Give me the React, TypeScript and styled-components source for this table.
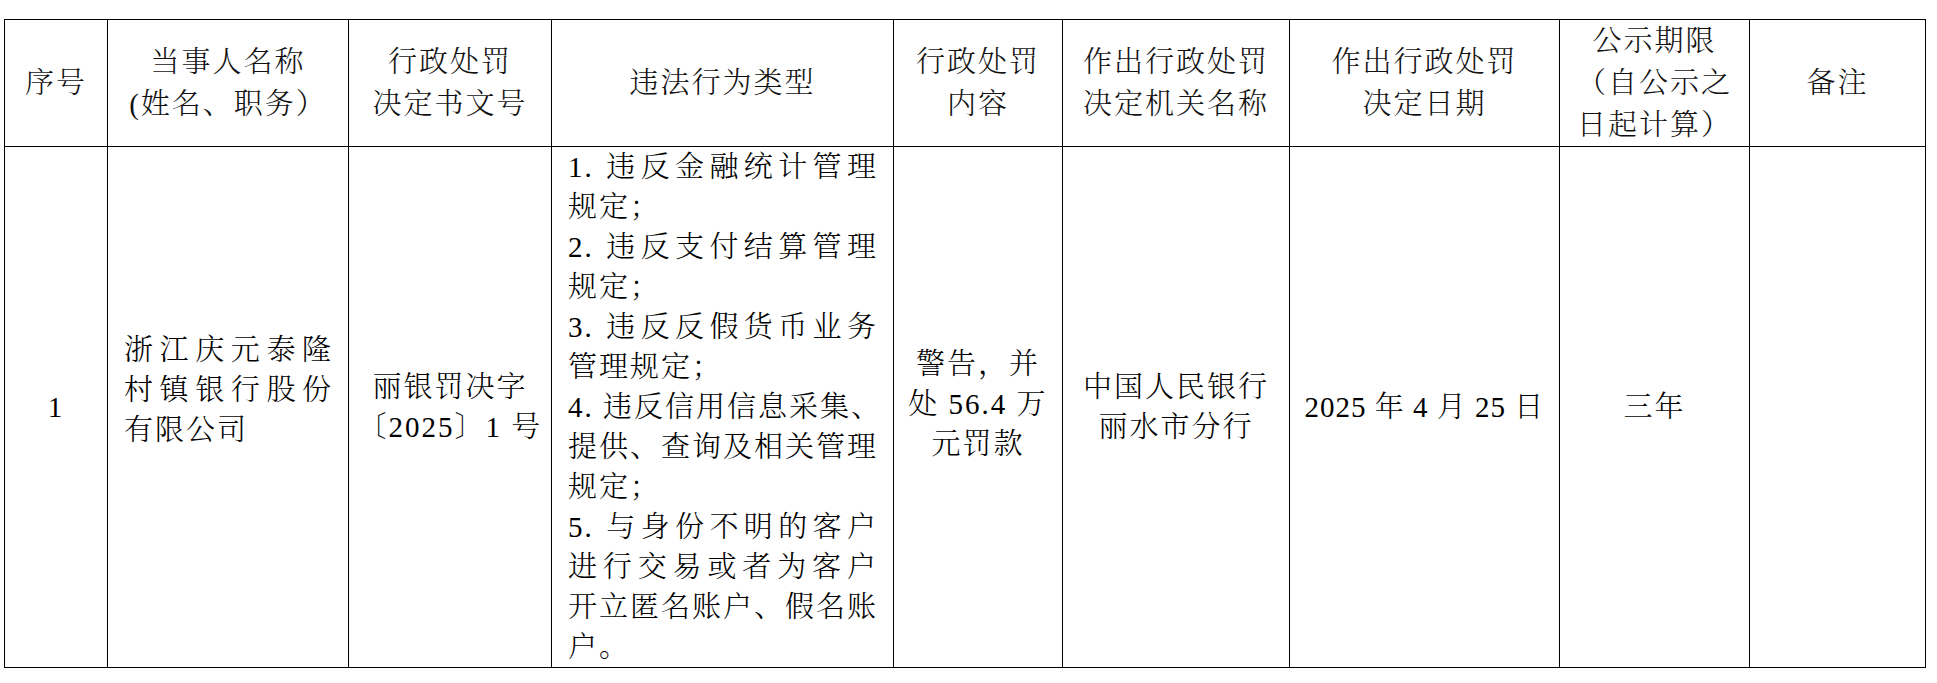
import * as React from "react";
import styled, { createGlobalStyle } from "styled-components";

const GlobalStyle = createGlobalStyle`
  html, body {
    margin: 0;
    padding: 0;
    background: #fff;
  }
  body {
    font-family: "Liberation Serif", "Noto Serif CJK SC", "Noto Sans CJK SC", serif;
    font-weight: 300;
    color: #000;
  }
`;

const Page = styled.div`
  padding: 19px 0 0 4px;
  width: 1937px;
  height: 683px;
  box-sizing: border-box;
  overflow: hidden;
`;

const Table = styled.div`
  display: grid;
  grid-template-columns: 103px 241px 203px 342px 169px 227px 270px 190px 176px;
  width: max-content;
  border-left: 1px solid #000;
  border-top: 1px solid #000;
`;

const Cell = styled.div<{ $align?: "center" | "left"; $top?: boolean; $lift?: number }>`
  box-sizing: border-box;
  border-right: 1px solid #000;
  border-bottom: 1px solid #000;
  display: flex;
  flex-direction: column;
  justify-content: ${(p) => (p.$top ? "flex-start" : "center")};
  align-items: stretch;
  text-align: ${(p) => p.$align || "center"};
  font-size: 29px;
  letter-spacing: 2px;
  padding: 0 ${(p) => (p.$align === "left" ? "15px 0 16px" : "0 0")};
  padding-bottom: ${(p) => (p.$lift ? `${p.$lift}px` : "0")};
`;

const HeadCell = styled(Cell)`
  line-height: 42px;
  min-height: 126px;
  color: #111;
`;

const BodyCell = styled(Cell)`
  line-height: 40px;
`;

const Line = styled.span<{ $full?: boolean }>`
  display: block;
  white-space: nowrap;
  text-align: ${(p) => (p.$full ? "justify" : "inherit")};
  text-align-last: ${(p) => (p.$full ? "justify" : "auto")};
`;

const DateText = styled.span`
  display: block;
  letter-spacing: 1px;
`;

const headers: string[][] = [
  ["序号"],
  ["当事人名称", "(姓名、职务）"],
  ["行政处罚", "决定书文号"],
  ["违法行为类型"],
  ["行政处罚", "内容"],
  ["作出行政处罚", "决定机关名称"],
  ["作出行政处罚", "决定日期"],
  ["公示期限", "（自公示之", "日起计算）"],
  ["备注"],
];

const violations: [string, boolean][] = [
  ["1. 违反金融统计管理", true],
  ["规定；", false],
  ["2. 违反支付结算管理", true],
  ["规定；", false],
  ["3. 违反反假货币业务", true],
  ["管理规定；", false],
  ["4. 违反信用信息采集、", true],
  ["提供、查询及相关管理", true],
  ["规定；", false],
  ["5. 与身份不明的客户", true],
  ["进行交易或者为客户", true],
  ["开立匿名账户、假名账", true],
  ["户。", false],
];

const App = () => {
  return (
    <>
      <GlobalStyle />
      <Page>
        <Table>
          {headers.map((lines, i) => (
            <HeadCell key={i}>
              {lines.map((l, j) => (
                <Line key={j}>{l}</Line>
              ))}
            </HeadCell>
          ))}

          <BodyCell>
            <Line>1</Line>
          </BodyCell>
          <BodyCell $align="left" $lift={34}>
            <Line $full>浙江庆元泰隆</Line>
            <Line $full>村镇银行股份</Line>
            <Line>有限公司</Line>
          </BodyCell>
          <BodyCell>
            <Line>丽银罚决字</Line>
            <Line>〔2025〕1 号</Line>
          </BodyCell>
          <BodyCell $align="left" $top>
            {violations.map(([text, full], i) => (
              <Line key={i} $full={full}>
                {text}
              </Line>
            ))}
          </BodyCell>
          <BodyCell $lift={6}>
            <Line>警告，并</Line>
            <Line>处 56.4 万</Line>
            <Line>元罚款</Line>
          </BodyCell>
          <BodyCell>
            <Line>中国人民银行</Line>
            <Line>丽水市分行</Line>
          </BodyCell>
          <BodyCell>
            <DateText>2025 年 4 月 25 日</DateText>
          </BodyCell>
          <BodyCell>
            <Line>三年</Line>
          </BodyCell>
          <BodyCell />
        </Table>
      </Page>
    </>
  );
};

export default App;
